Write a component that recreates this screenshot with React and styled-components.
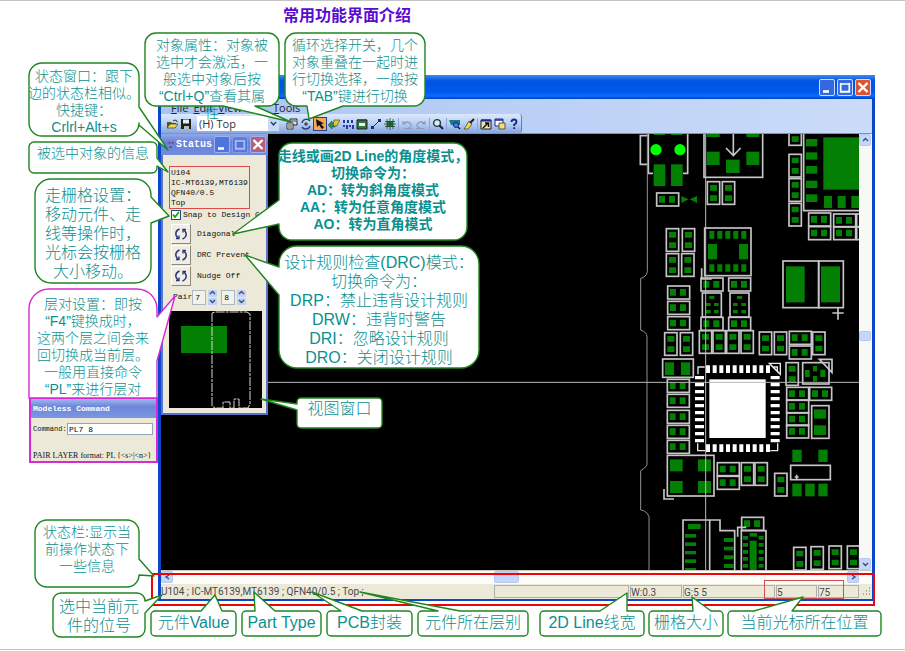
import React from "react";
import styled, { createGlobalStyle, css } from "styled-components";

const GlobalStyle = createGlobalStyle`
  body {
    margin: 0;
    background: #ffffff;
    font-family: "Liberation Sans", "Noto Sans CJK SC", sans-serif;
  }
  * {
    box-sizing: border-box;
  }
`;

const teal = "#0b9090";
const green = "#1f861f";
const magenta = "#d42bd4";
const face = "#ece9d8";

const Slide = styled.main`
  position: relative;
  display: grid;
  grid-template-columns: 158px minmax(0, 1fr);
  padding-bottom: 12px;
  border-top: 1px solid #c4c4c4;
  border-bottom: 1px solid #c4c4c4;
`;

const Notes = styled.aside`
  position: relative;
  z-index: 2;
  display: flex;
  flex-direction: column;
  align-items: flex-start;
  padding: 62px 0 0 29px;
`;

const NoteGroup = styled.div`
  display: flex;
  flex-direction: column;
  gap: 6px;
`;

const LowerNotes = styled(NoteGroup)`
  margin-top: 57px;
  padding-left: 6px;
`;

const Content = styled.section`
  padding-right: 30px;
`;

const Title = styled.h1`
  height: 74px;
  margin: 0;
  padding-left: 125px;
  font-size: 16px;
  line-height: 29px;
  color: #5a0bd0;
`;

/* speech bubbles */

const BubbleBox = styled.div`
  position: relative;
  flex: none;
  width: ${(props) => props.$w}px;
  height: ${(props) => props.$h}px;
  padding-top: ${(props) => props.$pad}px;
  margin-left: ${(props) => props.$indent || 0}px;
  font-size: ${(props) => (props.$big ? 16 : 14)}px;
  line-height: ${(props) => (props.$big ? 19 : 17)}px;
  font-weight: ${(props) => (props.$bold ? 700 : 300)};
  color: ${teal};
  ${(props) =>
    props.$at &&
    css`
      position: absolute;
      z-index: 3;
      left: ${props.$at[0]}px;
      top: ${props.$at[1]}px;
    `}
`;

const BubbleShape = styled.svg`
  position: absolute;
  left: 0;
  top: 0;
  overflow: visible;
  pointer-events: none;
`;

const Line = styled.p`
  position: relative;
  display: flex;
  justify-content: center;
  margin: 0;
  white-space: nowrap;
`;

const bubblePath = (w, h, r, tail, square) => {
  const { side, a, b, tip } = tail;
  const q = square ? 0 : r;
  const t = `L${tip[0]} ${tip[1]}`;
  return [
    `M${r} 0`,
    side === "top" ? `H${a} ${t} L${b} 0` : "",
    `H${w - r} A${r} ${r} 0 0 1 ${w} ${r}`,
    side === "right" ? `L${w} ${a} ${t} L${w} ${b}` : "",
    `V${h - q} A${q} ${q} 0 0 1 ${w - q} ${h}`,
    side === "bottom" ? `H${b} ${t} L${a} ${h}` : "",
    `H${q} A${q} ${q} 0 0 1 0 ${h - q}`,
    side === "left" ? `V${b} ${t} L0 ${a}` : "",
    `V${r} A${r} ${r} 0 0 1 ${r} 0 Z`,
  ].join(" ");
};

const Bubble = ({ w, h, r, pad, tail, lines, at, big, bold, square, color, indent }) => (
  <BubbleBox $w={w} $h={h} $pad={pad} $at={at} $big={big} $bold={bold} $indent={indent}>
    <BubbleShape width={w} height={h} aria-hidden="true">
      <path
        d={bubblePath(w, h, r, tail, square)}
        fill="#fff"
        stroke={color || green}
        strokeWidth="1.4"
        strokeLinejoin="round"
      />
    </BubbleShape>
    {lines.map((line) => (
      <Line key={line}>{line}</Line>
    ))}
  </BubbleBox>
);

/* main window */

const Window = styled.div`
  position: relative;
  background: ${face};
  border: solid #0d47c9;
  border-width: 0 3px 2px;
`;

const TitleBar = styled.div`
  display: flex;
  align-items: center;
  justify-content: flex-end;
  gap: 2px;
  height: 24px;
  margin: 0 -3px;
  padding-right: 4px;
  background: linear-gradient(#3d8cf0, #0054e3 25%, #0059ee 70%, #0a6bff 88%, #003fc0);
`;

const captionColors = {
  plain: "#3468e0",
  close: "#df5530",
  softPlain: "#4f74dd",
  softClose: "#b3607c",
};

const CaptionButton = styled.button`
  display: flex;
  width: 16px;
  height: 17px;
  padding: 0;
  border: 1px solid ${(props) => (props.$soft ? "#9db1ee" : "#c9dcff")};
  border-radius: 2px;
  background: ${(props) => captionColors[props.$tone || "plain"]};
  opacity: ${(props) => (props.$dim ? 0.45 : 1)};
`;

const MenuBar = styled.nav`
  position: relative;
  height: 15px;
  padding-left: 10px;
  display: flex;
  gap: 5px;
  background: linear-gradient(90deg, #a9c3f2, #cbdcf9);
`;

const MenuItem = styled.button`
  padding: 0;
  border: 0;
  background: none;
  font: 11px/17px "Open Sans", sans-serif;
  color: #223;
  margin-left: ${(props) => (props.$gap ? 26 : 0)}px;
`;

const ToolRow = styled.div`
  height: 20px;
  background: linear-gradient(90deg, #a9c3f2, #cbdcf9);
  border-bottom: 1px solid #8f9390;
`;

const Toolbar = styled.div`
  display: flex;
  align-items: center;
  width: 361px;
  height: 19px;
  padding-left: 4px;
  background: linear-gradient(#dce9fd, #b9d0f5 50%, #86a6df);
  border-right: 1px solid #5d7fc0;
  border-radius: 0 3px 3px 0;
`;

const ToolButton = styled.button`
  display: flex;
  align-items: center;
  justify-content: center;
  flex: none;
  width: 14px;
  height: 14px;
  padding: 0;
  border: ${(props) => (props.$on ? "1px solid #26418f" : "0")};
  background: ${(props) => (props.$on ? "#f8a650" : "none")};
`;

const Separator = styled.span`
  width: 1px;
  height: 12px;
  margin: 0 1px;
  background: #8ea5d2;
`;

const LayerBox = styled.label`
  position: relative;
  width: 83px;
  height: 15px;
  margin: 0 6px 0 4px;
  background: #fff;
`;

const LayerSelect = styled.select`
  display: block;
  appearance: none;
  width: 100%;
  height: 15px;
  padding: 0 2px;
  border: 0;
  background: transparent;
  font: 11px/15px "Open Sans", sans-serif;
  color: #333;
`;

const DropArrow = styled.svg`
  position: absolute;
  right: 0;
  top: 0;
  pointer-events: none;
`;

const Workspace = styled.div`
  position: relative;
  display: flex;
  background: #000;
`;

const Board = styled.svg`
  display: block;
  flex: 1;
  min-width: 0;
  height: 436px;
`;

const VScroll = styled.div`
  display: flex;
  flex-direction: column;
  justify-content: space-between;
  width: 13px;
  background: #f8f8f4;
`;

const HScroll = styled.div`
  display: flex;
  justify-content: space-between;
  height: 14px;
  padding-right: 13px;
  border-top: 1px solid #c9c7bb;
  background: #fcfcf8;
`;

const ScrollPart = styled.button`
  display: flex;
  align-items: center;
  justify-content: center;
  width: ${(props) => props.$w || 12}px;
  height: ${(props) => props.$h || 12}px;
  padding: 0;
  border: 1px solid #b3c8f6;
  border-radius: 2px;
  background: #c6d6fb;
`;

const VThumb = styled(ScrollPart)`
  margin-bottom: 32px;
`;

const HThumb = styled(ScrollPart)`
  margin-right: 8px;
`;

const StatusBar = styled.footer`
  display: flex;
  align-items: center;
  gap: 1px;
  height: 15px;
  font: 10px/13px Roboto, sans-serif;
  color: #4a4a4a;
`;

const StatusText = styled.span`
  flex: 1;
  white-space: nowrap;
`;

const StatusField = styled.span`
  width: ${(props) => props.$w}px;
  height: 13px;
  border: 1px solid #aeb0b0;
  white-space: nowrap;
`;

const BarHighlight = styled.div`
  position: absolute;
  left: -10px;
  right: -3px;
  bottom: -7px;
  height: 33px;
  border: 2px solid #ee0505;
  pointer-events: none;
`;

const CursorHighlight = styled.div`
  position: absolute;
  right: 28px;
  bottom: 0;
  width: 80px;
  height: 19px;
  border: 1px solid #d05050;
  pointer-events: none;
`;

/* status panel */

const Panel = styled.section`
  position: absolute;
  left: 0;
  top: 0;
  width: 107px;
  border: 2px solid #5a73cf;
  border-top: 0;
  background: ${face};
  font-family: "Liberation Mono", monospace;
  font-size: 8px;
  line-height: 10px;
  color: #111;
`;

const PanelTitle = styled.header`
  display: flex;
  align-items: center;
  gap: 2px;
  height: 21px;
  margin: 0 -2px;
  padding: 0 2px 0 7px;
  background: linear-gradient(#93a9ea, #6780d6 40%, #728ddf);
  color: #fff;
`;

const PanelName = styled.h2`
  flex: 1;
  margin: 0;
  font-size: 10px;
  line-height: 12px;
`;

const PanelBody = styled.div`
  display: flex;
  flex-direction: column;
  align-items: flex-start;
  padding: 11px 0 5px 6px;
`;

const Selection = styled.div`
  width: 81px;
  height: 43px;
  padding: 1px;
  border: 1px solid #dc4a4a;
  white-space: nowrap;
`;

const SnapRow = styled.label`
  display: flex;
  align-items: center;
  gap: 2px;
  height: 12px;
  padding-left: 2px;
  margin-bottom: 2px;
  white-space: nowrap;
`;

const Tick = styled.input`
  appearance: none;
  flex: none;
  width: 10px;
  height: 10px;
  margin: 0;
  border: 1px solid #1c5180;
  background: #fff;
`;

const TickMark = styled.svg`
  position: absolute;
  margin-left: 1px;
  pointer-events: none;
`;

const ModeRow = styled.label`
  display: flex;
  align-items: center;
  gap: 6px;
  height: 21px;
  padding-left: 2px;
  white-space: nowrap;
`;

const ModeButton = styled.button`
  display: flex;
  align-items: center;
  justify-content: center;
  width: 20px;
  height: 20px;
  padding: 0;
  background: #f0eee2;
  border: 1px solid;
  border-color: #fff #8d8a7d #8d8a7d #fff;
`;

const PairRow = styled.div`
  display: flex;
  align-items: center;
  height: 22px;
  padding-left: 4px;
`;

const PairInput = styled.input`
  width: 14px;
  height: 15px;
  padding: 0 2px;
  border: 1px solid #aab8c4;
  background: #f3f2ea;
  font: inherit;
`;

const Spin = styled.span`
  display: flex;
  flex-direction: column;
  gap: 1px;
  margin: 0 4px 0 2px;
`;

const SpinButton = styled.button`
  display: flex;
  align-items: center;
  justify-content: center;
  width: 9px;
  height: 7px;
  padding: 0;
  border: 0;
  border-radius: 1px;
  background: #c1d2f8;
`;

const Overview = styled.svg`
  display: block;
  margin-top: 3px;
  background: #000;
`;

/* command dialog */

const Dialog = styled.form`
  width: 129px;
  height: 66px;
  margin-top: -7px;
  border: 2px solid ${magenta};
  background: ${face};
  font: 8px/10px "Liberation Mono", monospace;
  color: #111;
`;

const DialogTitle = styled.h2`
  margin: 0 0 5px;
  padding-left: 2px;
  font-size: 8px;
  line-height: 19px;
  color: #fff;
  background: linear-gradient(#a4b6ee, #6c86d9 40%, #7b97e2);
`;

const CommandRow = styled.label`
  display: flex;
  align-items: center;
  justify-content: space-between;
  padding: 0 3px 0 2px;
  font-size: 7px;
`;

const CommandInput = styled.input`
  width: 86px;
  height: 12px;
  padding: 0 1px;
  border: 1px solid #8ea6c0;
  font: inherit;
  font-size: 8px;
`;

const Hint = styled.p`
  margin: 16px 0 0;
  padding-left: 2px;
  font-family: "Liberation Serif", serif;
  font-size: 8px;
  line-height: 10px;
  white-space: nowrap;
`;

const LabelRow = styled.div`
  position: relative;
  z-index: 3;
  display: flex;
  gap: 12px;
  margin: 10px 0 0 -7px;
`;

const LabelGroup = styled.div`
  display: flex;
  gap: ${(props) => props.$gap}px;
`;

const Caption = ({ kind }) => (
  <svg width="14" height="15" viewBox="0 0 14 15" fill="none" stroke="#fff">
    {kind === "min" && <path d="M3 11.500h6" strokeWidth="2.600" />}
    {kind === "max" && <path d="M2 4h10M2.700 3v9h8.600V3M2 11.700h10" strokeWidth="1.700" />}
    {kind === "close" && <path d="M2.500 3l9 9M11.500 3l-9 9" strokeWidth="2.400" />}
  </svg>
);

const Arrow = ({ d = "M1 4l2.500-2.500L6 4" }) => (
  <svg width="7" height="6" viewBox="0 0 7 6" fill="none" stroke="#3c4f78" strokeWidth="1.4">
    <path d={d} />
  </svg>
);

const navy = "#1c2a8c";

const icons = {
  open: (
    <>
      <path d="M1 10V4h4l1 1h4v2H4z" fill="#5c5420" />
      <path d="M1 10l3-4h8l-3 4z" fill="#f2d656" stroke="#40380c" strokeWidth=".7" />
      <path d="M7 3q2-2 4 0v1" fill="none" stroke="#333" />
    </>
  ),
  save: (
    <>
      <path d="M1 1h10v10H1z" fill="#1d2312" />
      <path d="M3 1.500h6v4H3z" fill="#e8ecf5" />
      <path d="M4 8h5v3H4z" fill="#b8bdc6" />
    </>
  ),
  props: (
    <>
      <path d="M4 1h7v6H4z" fill="#dfe3ea" stroke="#222" />
      <path d="M1 5h6v6H1z" fill="#faf8ef" stroke="#333" />
      <path d="M2 7h4M2 9h4M5 3h5" stroke="#444" />
    </>
  ),
  cycle: (
    <>
      <path d="M10 3A4.500 4.500 0 0 0 2 5M2 9a4.500 4.500 0 0 0 8-1" fill="none" stroke="#333d70" strokeWidth="1.5" />
      <path d="M4 6h4M6 4v4" stroke="#222" />
    </>
  ),
  select: <path d="M2 1l1 8 2-2 3 4 2-1.500-3-3.500 3-.5z" fill="#111" />,
  move: (
    <>
      <path d="M0 7l4-4v2h3v4H4v2z" fill="#2f9440" stroke="#135" strokeWidth=".5" />
      <path d="M6 2h6L9 8H5z" fill="#e2c838" stroke="#333" strokeWidth=".6" />
    </>
  ),
  parts: <path d="M1 2h2v3H1zM5 2h2v3H5zM9 2h2v3H9zM1 7h2v2H1zM4 7h2v4H4zM7 7h2v2H7zM10 7h2v4h-2z" fill="#2638a8" />,
  drafting: (
    <>
      <path d="M1 2h10v9H1z" fill="#2d7740" stroke="#26251c" />
      <path d="M3 5h6v3H3z" fill="#f0f0e8" />
      <path d="M1 1.500h10" stroke="#a03030" />
    </>
  ),
  route: (
    <>
      <path d="M2 10l7-7" stroke={navy} />
      <path d="M1 8h3v3H1zM8 1h3v3H8z" fill={navy} />
    </>
  ),
  chip: (
    <>
      <path d="M3 3h6v6H3z" fill="#237b38" />
      <path d="M6 0v12M0 6h12M3 1v10M9 1v10M1 3.500h10M1 8.500h10" stroke="#24472c" strokeWidth=".8" />
    </>
  ),
  undo: <path d="M2 3v3h3M2 6q4-4 8 0 1 3-3 4M3 10.500h8" fill="none" stroke="#8e9bb6" strokeWidth="1.2" />,
  redo: <path d="M10 3v3H7M10 6Q6 2 2 6q-1 3 3 4M1 10.500h8" fill="none" stroke="#8e9bb6" strokeWidth="1.2" />,
  zoom: (
    <>
      <circle cx="5" cy="5" r="3.400" fill="#d8eef0" stroke="#233" strokeWidth="1.3" />
      <path d="M7.500 7.500L11 11" stroke="#111b66" strokeWidth="2" />
    </>
  ),
  board: (
    <>
      <path d="M0 2h11v5H2z" fill="#157b82" />
      <circle cx="7" cy="7" r="2.500" fill="#4e7ee0" stroke="#112a80" />
      <path d="M9 9l2 2" stroke="#112" strokeWidth="1.500" />
    </>
  ),
  brush: (
    <>
      <path d="M6 3l3 3-4 5H1l2-3z" fill="#efe04e" stroke="#333" strokeWidth=".7" />
      <path d="M7 5l4-4" stroke="#222" strokeWidth="2.200" />
    </>
  ),
  output: (
    <>
      <path d="M1 2h10v9H1z" fill="#efe6b0" stroke="#181818" />
      <path d="M1 2.500h10" stroke={navy} strokeWidth="2" />
      <path d="M3 10l5-5M5 5h3.500v4" fill="none" stroke="#111" strokeWidth="1.500" />
    </>
  ),
  windows: (
    <>
      <path d="M1 1h8v7H1z" fill="#fff" stroke={navy} />
      <path d="M5 5h6v6H5z" fill="#f4df6b" stroke="#555" />
      <path d="M1 2h8" stroke={navy} strokeWidth="1.500" />
    </>
  ),
  help: (
    <path d="M3.500 4q0-2.500 2.500-2.500T8.500 4Q8.500 5.500 6.200 6.500V8M6.200 9.300v1.800" fill="none" stroke={navy} strokeWidth="1.900" />
  ),
};

const Tool = ({ name, on }) => (
  <ToolButton type="button" aria-label={name} $on={on}>
    <svg width="12" height="12" viewBox="0 0 12 12">{icons[name]}</svg>
  </ToolButton>
);

/* board drawing, three units to a pixel */

const upright = [
  [477, -22], [477, 73], [477, 146], [477, 220], [232, 155], [277, 155],
  [109, 296], [157, 296], [109, 371], [155, 371], [104, 608], [151, 608],
  [208, 602], [249, 602], [290, 602], [333, 602], [388, 606], [433, 606],
  [548, 606], [468, 698], [334, 998], [375, 998], [434, 1030],
  [491, 1252], [543, 1250], [597, 1248], [652, 1248],
];

const flat = [
  [80, 189], [536, 249], [611, 252], [536, 290], [611, 290], [680, 252],
  [680, 290], [113, 468], [113, 514], [113, 560], [213, 444], [296, 444],
  [213, 562], [296, 562], [478, 604], [478, 648], [112, 748], [112, 793],
  [112, 841], [112, 886], [112, 931], [262, 998], [262, 1039], [470, 772],
  [470, 810], [470, 848], [470, 885], [539, 772], [335, 1162],
];

const outlines = [
  [98, 687, 92, 55], [459, 393, 107, 140], [566, 393, 74, 140], [224, 294, 139, 143],
  [217, 489, 57, 72], [300, 489, 57, 72], [112, 976, 140, 122], [545, 827, 52, 98],
  [518, 698, 79, 64], [482, 1006, 119, 43], [334, 1202, 74, 150], [222, -40, 176, 182],
];

const pads = [
  [71, 0, 34, 15], [123, 0, 34, 15], [71, 103, 35, 65], [123, 103, 35, 65],
  [230, 0, 39, 21], [349, 0, 39, 21], [230, 65, 39, 40], [349, 65, 39, 40], [288, 89, 41, 40],
  [528, 27, 34, 22], [528, 67, 34, 22], [528, 108, 34, 23], [528, 152, 34, 22], [528, 193, 34, 23],
  [580, 22, 110, 157], [582, 198, 24, 36], [623, 198, 24, 36], [664, 198, 26, 36],
  [234, 342, 27, 46], [327, 342, 27, 46], [468, 409, 56, 108], [573, 409, 57, 108],
  [238, 498, 15, 9], [228, 519, 14, 9], [252, 519, 14, 9], [228, 540, 14, 10], [252, 540, 14, 10],
  [321, 498, 15, 9], [309, 519, 14, 9], [334, 519, 14, 9], [309, 540, 14, 10], [334, 540, 14, 10],
  [105, 697, 27, 38], [153, 697, 27, 38], [120, 988, 38, 36], [204, 988, 39, 36],
  [120, 1053, 38, 36], [204, 1053, 39, 36], [552, 838, 36, 28], [552, 886, 36, 29],
  [525, 720, 14, 21], [549, 708, 12, 16], [549, 738, 12, 16], [571, 719, 15, 22],
  [487, 959, 28, 37], [565, 959, 28, 37], [487, 1061, 28, 38], [526, 1061, 28, 38], [565, 1061, 28, 38],
  [174, 1182, 38, 15], [165, 1212, 33, 11], [165, 1237, 33, 11], [165, 1263, 33, 10], [165, 1288, 33, 11], [165, 1314, 33, 10],
  [282, 1224, 28, 12], [282, 1250, 28, 11], [282, 1276, 28, 11], [282, 1302, 28, 12],
  [359, 1209, 22, 11], [359, 1232, 21, 90],
];

const range = (n) => Array.from({ length: n }, (_, i) => i);

const BoardDrawing = () => (
  <Board viewBox="-1407 12 2094 1308" preserveAspectRatio="xMaxYMin slice" role="img" aria-label="PCB layout">
    <g fill="#038003">
      {upright.map(([x, y]) => (
        <path key={`${x} ${y}`} d={`M${x + 8} ${y + 10}h21v17h-21zM${x + 8} ${y + 41}h21v17h-21z`} />
      ))}
      {flat.map(([x, y]) => (
        <path key={`${x} ${y}`} d={`M${x + 7} ${y + 9}h18v20h-18zM${x + 37} ${y + 9}h18v20h-18z`} />
      ))}
      {pads.map(([x, y, w, h]) => (
        <rect key={`${x} ${y}`} x={x} y={y} width={w} height={h} />
      ))}
      {range(5).map((i) => (
        <path key={i} d={`M${238 + i * 24} 303h15v23h-15zM${238 + i * 24} 403h15v22h-15z`} />
      ))}
      {range(5).map((i) => (
        <path key={i} d={`M339 ${1218 + i * 21}h15v11h-15zM386 ${1218 + i * 21}h15v11h-15z`} />
      ))}
      <path d="M154 198l22 10-22 11zM201 198l-22 10 22 11z" />
    </g>
    <g fill="none" stroke="#c6c6c6" strokeWidth="5">
      {upright.map(([x, y]) => (
        <rect key={`${x} ${y}`} x={x} y={y} width="37" height="68" />
      ))}
      {flat.map(([x, y]) => (
        <rect key={`${x} ${y}`} x={x} y={y} width="66" height="39" />
      ))}
      {outlines.map(([x, y, w, h]) => (
        <rect key={`${x} ${y}`} x={x} y={y} width={w} height={h} />
      ))}
      <path d="M55 0v130h14M173 0v130h-14M52 17H31v86h22M521 0v242h169" />
      <path d="M310 0v76M288 54l22 23 22-23" />
      <path d="M215 415v32h30M624 533v36M607 549h34M102 1077v30h30" />
      <path d="M159 1330V1170h111v32h44v130M239 1170v160M323 1220v-28h26" />
      <path d="M568 688h38v39zM500 1034v14M494 1041h12" />
    </g>
    <g fill="none" stroke="#929292" strokeWidth="3">
      <path d="M52 0V425Q48 442 32 445V600Q50 606 51 620V1005Q42 1018 32 1022V1140Q50 1142 57 1160V1330" />
    </g>
    <g fill="#fff">
      {range(10).map((i) => (
        <path key={i} d={`M${228 + i * 20} 706h12v23h-12zM${228 + i * 20} 943h12v23h-12z`} />
      ))}
      {range(10).map((i) => (
        <path key={i} d={`M195 ${738 + i * 21}h27v10h-27zM422 ${738 + i * 21}h27v10h-27z`} />
      ))}
      <rect x="238" y="748" width="169" height="176" />
    </g>
    <path
      d="M204 733v-22h20M203 940v22h22M443 940v22h-22M418 700h33v33zM428 711h14v14z"
      fill="none"
      stroke="#e8e8e8"
      strokeWidth="4"
    />
    <circle cx="78" cy="59" r="17" fill="#00ff00" />
    <circle cx="150" cy="59" r="17" fill="#00ff00" />
    <path d="M-1407 757H690M227 0V1330" stroke="#b9b9b9" strokeWidth="3" />
  </Board>
);

const StatusPanel = () => (
  <Panel>
    <PanelTitle>
      <svg width="8" height="10" viewBox="0 0 8 10">
        <path d="M1 1h2v2H1zM5 1h2v2H5zM2 7h3v2H2z" fill="#842648" />
      </svg>
      <PanelName>Status</PanelName>
      <CaptionButton type="button" aria-label="Minimize panel" $soft $tone="softPlain"><Caption kind="min" /></CaptionButton>
      <CaptionButton type="button" aria-label="Maximize panel" $soft $dim><Caption kind="max" /></CaptionButton>
      <CaptionButton type="button" aria-label="Close panel" $soft $tone="softClose"><Caption kind="close" /></CaptionButton>
    </PanelTitle>
    <PanelBody>
      <Selection>
        U104<br />
        IC-MT6139,MT6139<br />
        QFN40/0.5<br />
        Top
      </Selection>
      <SnapRow>
        <Tick type="checkbox" defaultChecked />
        <TickMark width="8" height="8" viewBox="0 0 8 8">
          <path d="M1 3.500l2 2.500 4-5" fill="none" stroke="#16a016" strokeWidth="1.800" />
        </TickMark>
        Snap to Design G
      </SnapRow>
      {["Diagonal", "DRC Prevent", "Nudge Off"].map((mode) => (
        <ModeRow key={mode}>
          <ModeButton type="button">
            <svg width="14" height="14" viewBox="0 0 14 14" fill="none" stroke="#2b3478" strokeWidth="1.500">
              <path d="M5.500 2Q1 4 2 8q.5 2 2.500 3M8.500 12q4.500-2 3.500-6-.5-2-2.500-3" />
              <path d="M2 11.500h3V8.500M12 2.500H9v3" strokeWidth="1.300" />
            </svg>
          </ModeButton>
          {mode}
        </ModeRow>
      ))}
      <PairRow>
        <label htmlFor="pair-from">Pair</label>
        {["7", "8"].map((layer, i) => (
          <React.Fragment key={layer}>
            <PairInput id={i ? "pair-to" : "pair-from"} aria-label={i ? "Pair to" : undefined} defaultValue={layer} />
            <Spin>
              <SpinButton type="button" aria-label="Next layer"><Arrow /></SpinButton>
              <SpinButton type="button" aria-label="Previous layer"><Arrow d="M1 2l2.500 2.500L6 2" /></SpinButton>
            </Spin>
          </React.Fragment>
        ))}
      </PairRow>
      <Overview width="93" height="97" viewBox="0 0 93 97">
        <rect x="12" y="15" width="46" height="27" fill="#038003" />
        <path d="M43 2V95l3 2h8v-6h7v6h4v-9h5v9h9l2-4V3l-3-2H46z" fill="none" stroke="#d8d8d8" strokeDasharray="9 1 3 1" />
      </Overview>
    </PanelBody>
  </Panel>
);

const App = () => (
  <Slide>
    <GlobalStyle />
    <Notes>
      <NoteGroup>
        <Bubble w={110} h={73} r={13} pad={5}
          tail={{ side: "right", a: 44, b: 62, tip: [139, 87] }}
          lines={["状态窗口：跟下", "边的状态栏相似。", "快捷键：", "Crlrl+Alt+s"]} />
        <Bubble w={128} h={31} r={5} pad={3}
          tail={{ side: "right", a: 16, b: 24, tip: [139, 30] }}
          lines={["被选中对象的信息"]} />
        <Bubble w={116} h={104} r={16} pad={7} indent={6} big
          tail={{ side: "right", a: 18, b: 44, tip: [134, 37] }}
          lines={["走栅格设置：", "移动元件、走", "线等操作时，", "光标会按栅格", "大小移动。"]} />
        <Bubble w={128} h={109} r={20} pad={7} square color={magenta}
          tail={{ side: "right", a: 28, b: 72, tip: [146, 7] }}
          lines={["层对设置：即按", "“F4”键换成时，", "这两个层之间会来", "回切换成当前层。", "一般用直接命令", "“PL”来进行层对"]} />
        <Dialog>
          <DialogTitle>Modeless Command</DialogTitle>
          <CommandRow>
            Command:
            <CommandInput defaultValue="PL7 8" />
          </CommandRow>
          <Hint>{"PAIR LAYER format: PL {<s>|<n>}"}</Hint>
        </Dialog>
      </NoteGroup>
      <LowerNotes>
        <Bubble w={104} h={67} r={12} pad={4}
          tail={{ side: "right", a: 39, b: 55, tip: [119, 56] }}
          lines={["状态栏:显示当", "前操作状态下", "一些信息"]} />
        <Bubble w={92} h={44} r={8} pad={4} indent={18} big
          tail={{ side: "right", a: 8, b: 20, tip: [109, 2] }}
          lines={["选中当前元", "件的位号"]} />
      </LowerNotes>
    </Notes>

    <Content>
      <Title>常用功能界面介绍</Title>
      <Window>
        <TitleBar>
          <CaptionButton type="button" aria-label="Minimize"><Caption kind="min" /></CaptionButton>
          <CaptionButton type="button" aria-label="Maximize"><Caption kind="max" /></CaptionButton>
          <CaptionButton type="button" aria-label="Close" $tone="close"><Caption kind="close" /></CaptionButton>
        </TitleBar>
        <MenuBar>
          <MenuItem type="button"><u>F</u>ile</MenuItem>
          <MenuItem type="button"><u>E</u>dit</MenuItem>
          <MenuItem type="button"><u>V</u>iew</MenuItem>
          <MenuItem type="button" $gap><u>T</u>ools</MenuItem>
        </MenuBar>
        <ToolRow>
          <Toolbar>
            <Tool name="open" />
            <Tool name="save" />
            <LayerBox>
              <LayerSelect aria-label="Layer" defaultValue="top">
                <option value="top">(H) Top</option>
              </LayerSelect>
              <DropArrow width="11" height="15" viewBox="0 0 11 15">
                <path d="M0 0h11v15H0z" fill="#c9daf8" />
                <path d="M3 6l2.500 3L8 6" fill="none" stroke="#223a70" strokeWidth="1.400" />
              </DropArrow>
            </LayerBox>
            <Tool name="props" />
            <Tool name="cycle" />
            <Tool name="select" on />
            <Tool name="move" />
            <Tool name="parts" />
            <Tool name="drafting" />
            <Tool name="route" />
            <Tool name="chip" />
            <Separator />
            <Tool name="undo" />
            <Tool name="redo" />
            <Separator />
            <Tool name="zoom" />
            <Separator />
            <Tool name="board" />
            <Tool name="brush" />
            <Separator />
            <Tool name="output" />
            <Tool name="windows" />
            <Tool name="help" />
          </Toolbar>
        </ToolRow>
        <Workspace>
          <BoardDrawing />
          <VScroll>
            <ScrollPart type="button" aria-label="Scroll up"><Arrow /></ScrollPart>
            <VThumb type="button" aria-label="Vertical position" $h={10} />
            <ScrollPart type="button" aria-label="Scroll down"><Arrow d="M1 2l2.500 2.500L6 2" /></ScrollPart>
          </VScroll>
          <StatusPanel />
        </Workspace>
        <HScroll>
          <ScrollPart type="button" aria-label="Scroll left"><Arrow d="M5 1L2 3l3 2" /></ScrollPart>
          <HThumb type="button" aria-label="Horizontal position" $w={25} />
          <ScrollPart type="button" aria-label="Scroll right"><Arrow d="M2 1l3 2-3 2" /></ScrollPart>
        </HScroll>
        <StatusBar>
          <StatusText>U104 ; IC-MT6139,MT6139 ; QFN40/0.5 ; Top ;</StatusText>
          <StatusField $w={135} />
          <StatusField $w={52}>W:0.3</StatusField>
          <StatusField $w={92}>G:5 5</StatusField>
          <StatusField $w={41}>5</StatusField>
          <StatusField $w={41}>75</StatusField>
          <svg width="12" height="12" viewBox="0 0 12 12">
            <path d="M9 2h1M6 5h1M9 5h1M3 8h1M6 8h1M9 8h1" stroke="#9c9a8c" strokeWidth="1.500" />
          </svg>
        </StatusBar>
        <CursorHighlight />
        <BarHighlight />
      </Window>
      <LabelRow>
        <LabelGroup $gap={6}>
          <Bubble w={85} h={25} r={4} pad={2} big tail={{ side: "top", a: 50, b: 71, tip: [64, -16] }} lines={["元件Value"]} />
          <Bubble w={79} h={25} r={4} pad={2} big tail={{ side: "top", a: 13, b: 33, tip: [12, -19] }} lines={["Part Type"]} />
          <Bubble w={85} h={25} r={4} pad={2} big tail={{ side: "top", a: 14, b: 35, tip: [-15, -19] }} lines={["PCB封装"]} />
          <Bubble w={110} h={25} r={4} pad={2} big tail={{ side: "top", a: 20, b: 42, tip: [-58, -19] }} lines={["元件所在层别"]} />
        </LabelGroup>
        <LabelGroup $gap={5}>
          <Bubble w={104} h={25} r={4} pad={2} big tail={{ side: "top", a: 60, b: 87, tip: [87, -18] }} lines={["2D Line线宽"]} />
          <Bubble w={74} h={25} r={4} pad={2} big tail={{ side: "top", a: 44, b: 62, tip: [43, -14] }} lines={["栅格大小"]} />
          <Bubble w={153} h={25} r={4} pad={2} big tail={{ side: "top", a: 26, b: 64, tip: [75, -14] }} lines={["当前光标所在位置"]} />
        </LabelGroup>
      </LabelRow>
    </Content>

    <Bubble at={[145, 32]} w={134} h={73} r={11} pad={4}
      tail={{ side: "bottom", a: 78, b: 110, tip: [146, 89] }}
      lines={["对象属性：对象被", "选中才会激活，一", "般选中对象后按", "“Ctrl+Q”查看其属", "性"]} />
    <Bubble at={[285, 32]} w={140} h={73} r={11} pad={4}
      tail={{ side: "bottom", a: 22, b: 58, tip: [24, 86] }}
      lines={["循环选择开关，几个", "对象重叠在一起时进", "行切换选择，一般按", "“TAB”键进行切换"]} />
    <Bubble at={[279, 142]} w={188} h={97} r={13} pad={5} bold
      tail={{ side: "left", a: 57, b: 81, tip: [-46, 91] }}
      lines={["走线或画2D Line的角度模式，", "切换命令为：", "AD：转为斜角度模式", "AA：转为任意角度模式", "AO：转为直角模式"]} />
    <Bubble at={[279, 245]} w={200} h={122} r={18} pad={7} big
      tail={{ side: "left", a: 21, b: 49, tip: [-34, 9] }}
      lines={["设计规则检查(DRC)模式：", "切换命令为：", "DRP：禁止违背设计规则", "DRW：违背时警告", "DRI：忽略设计规则", "DRO：关闭设计规则"]} />
    <Bubble at={[297, 397]} w={85} h={30} r={4} pad={1} big
      tail={{ side: "left", a: 6, b: 12, tip: [-36, 1] }}
      lines={["视图窗口"]} />
  </Slide>
);

export default App;
